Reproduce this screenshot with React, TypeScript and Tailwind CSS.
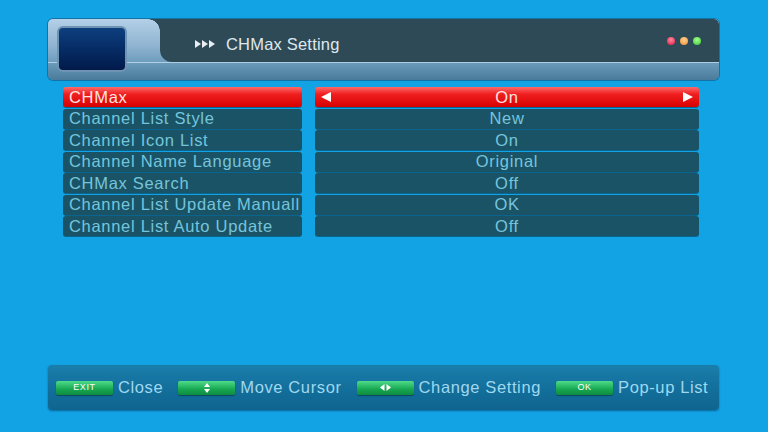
const rows: { label: string; value: string }[] = [
  { label: "CHMax", value: "On" },
  { label: "Channel List Style", value: "New" },
  { label: "Channel Icon List", value: "On" },
  { label: "Channel Name Language", value: "Original" },
  { label: "CHMax Search", value: "Off" },
  { label: "Channel List Update Manuall", value: "OK" },
  { label: "Channel List Auto Update", value: "Off" },
];

function GreenKey({ children }: { children: React.ReactNode }) {
  return (
    <div className="flex h-[14px] w-[57px] shrink-0 items-center justify-center rounded-[2px] bg-[linear-gradient(#4fdc8a,#16a650_60%,#0e8c40)] text-[9px] leading-none text-white shadow-[0_1px_1px_rgba(0,0,0,0.35)]">
      {children}
    </div>
  );
}

export default function App() {
  return (
    <div
      className="relative h-[432px] w-[768px] overflow-hidden bg-[#12a3e4]"
      style={{ fontFamily: '"Liberation Sans", Arial, sans-serif' }}
    >
      {/* header */}
      <div className="absolute left-[48px] top-[19px] h-[61px] w-[671px] overflow-hidden rounded-[5px] bg-[linear-gradient(#b3d0e7,#8fb3d0_45%,#6b9bbb_72%,#4b7b9b)] shadow-[0_0_0_1px_rgba(20,60,90,0.45)]">
        <div className="flex h-[43px]">
          <div className="flex w-[112px] shrink-0 items-start pl-[9px] pt-[7px]">
            <div className="h-[46px] w-[70px] rounded-[6px] border-2 border-[#6f93b3] bg-[linear-gradient(#0d3f7e,#062a62_55%,#021a4a)]" />
          </div>
          <div className="relative flex flex-1 items-center rounded-bl-[12px] rounded-tr-[5px] bg-[#2e4a56] pl-[35px] pr-[18px]">
            <div className="absolute -left-[12px] top-0 h-[12px] w-[12px] bg-[radial-gradient(circle_at_0_100%,transparent_11.5px,#2e4a56_12px)]" />
            <div className="flex items-center pt-[7px]">
              <span className="flex items-center gap-[1px] pr-[11px]">
                {[0, 1, 2].map((i) => (
                  <svg key={i} width="6" height="8" viewBox="0 0 6 8">
                    <path d="M0 0 L6 4 L0 8 Z" fill="#e8eef2" />
                  </svg>
                ))}
              </span>
              <span className="text-[16.5px] tracking-[0.2px] text-[#dfe8ee]">CHMax Setting</span>
            </div>
            <div className="ml-auto flex gap-[5px]">
              <span className="h-[8px] w-[8px] rounded-full bg-[radial-gradient(circle_at_50%_35%,#ff8aa0,#e0163e)]" />
              <span className="h-[8px] w-[8px] rounded-full bg-[radial-gradient(circle_at_50%_35%,#ffd090,#ee9030)]" />
              <span className="h-[8px] w-[8px] rounded-full bg-[radial-gradient(circle_at_50%_35%,#a8ff90,#30c830)]" />
            </div>
          </div>
        </div>
        <div className="h-[1px] bg-[#cfe4f2]/70" />
      </div>

      {/* settings list */}
      <div className="absolute left-[63px] top-[87px] flex w-[636px] flex-col gap-[1.5px] text-[16.5px] tracking-[0.7px]">
        {rows.map((r, i) => {
          const sel = i === 0;
          const box = sel
            ? "bg-[linear-gradient(#ff6a6a,#f02020_35%,#d80000)] text-[#ffe4e0]"
            : "bg-[#1b5366] text-[#74c5dc]";
          return (
            <div key={r.label} className="flex h-[20px] gap-[13px]">
              <div className={`flex w-[239px] items-center rounded-[3px] pl-[6px] leading-none whitespace-nowrap shadow-[0_1px_0_rgba(0,40,60,0.5)] ${box}`}>
                {r.label}
              </div>
              <div className={`relative flex flex-1 items-center justify-center rounded-[3px] leading-none shadow-[0_1px_0_rgba(0,40,60,0.5)] ${box}`}>
                {sel && (
                  <svg className="absolute left-[6px]" width="10" height="10" viewBox="0 0 10 10">
                    <path d="M10 0 L0 5 L10 10 Z" fill="#ffffff" />
                  </svg>
                )}
                {r.value}
                {sel && (
                  <svg className="absolute right-[6px]" width="10" height="10" viewBox="0 0 10 10">
                    <path d="M0 0 L10 5 L0 10 Z" fill="#ffffff" />
                  </svg>
                )}
              </div>
            </div>
          );
        })}
      </div>

      {/* footer */}
      <div className="absolute left-[48px] top-[365px] flex h-[45px] w-[671px] items-center rounded-[4px] bg-[linear-gradient(#1a7eab,#126d99_60%,#0f6590)] pl-[8px] text-[16.5px] tracking-[0.62px] text-[#9fd8f0] shadow-[0_1px_2px_rgba(0,40,80,0.5)]">
        <GreenKey>EXIT</GreenKey>
        <span className="ml-[5px] mr-[15px]">Close</span>
        <GreenKey>
          <svg width="6" height="10" viewBox="0 0 6 10">
            <path d="M3 0 L6 4 L0 4 Z M0 6 L6 6 L3 10 Z" fill="#ffffff" />
          </svg>
        </GreenKey>
        <span className="ml-[5px] mr-[15px]">Move Cursor</span>
        <GreenKey>
          <svg width="11" height="7" viewBox="0 0 11 7">
            <path d="M0 3.5 L4.5 0 L4.5 7 Z M6.5 0 L11 3.5 L6.5 7 Z" fill="#ffffff" />
          </svg>
        </GreenKey>
        <span className="ml-[5px] mr-[15px]">Change Setting</span>
        <GreenKey>OK</GreenKey>
        <span className="ml-[5px]">Pop-up List</span>
      </div>
    </div>
  );
}
